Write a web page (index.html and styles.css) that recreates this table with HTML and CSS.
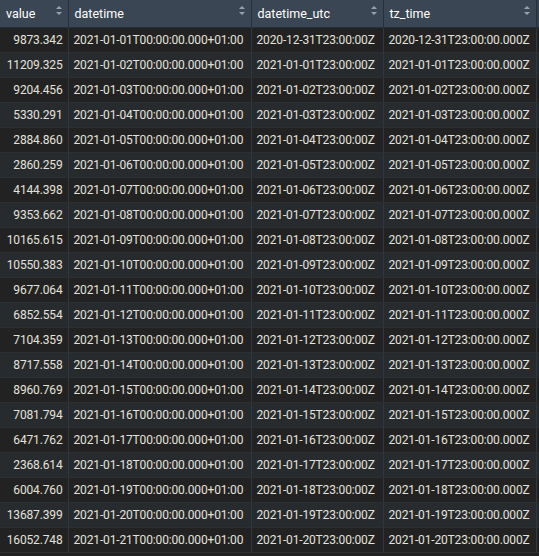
FILE: index.html
```html
<!DOCTYPE html>
<html lang="en">
<head>
    <meta charset="UTF-8">
    <title>Data viewer</title>
    <link rel="stylesheet" href="styles.css">
</head>
<body>

    <table class="grid">
        <colgroup>
            <col class="col-value">
            <col class="col-datetime">
            <col class="col-utc">
            <col class="col-tz">
            <col class="col-fill">
        </colgroup>
        <thead>
            <tr>
                <th><span>value</span><i class="sort"></i></th>
                <th><span>datetime</span><i class="sort"></i></th>
                <th><span>datetime_utc</span><i class="sort"></i></th>
                <th><span>tz_time</span><i class="sort"></i></th>
                <th class="fill"></th>
            </tr>
        </thead>
        <tbody id="rows"></tbody>
    </table>

    <script>
        // Build the rows from the values
        const values = [
            '9873.342', '11209.325', '9204.456', '5330.291', '2884.860', '2860.259', '4144.398',
            '9353.662', '10165.615', '10550.383', '9677.064', '6852.554', '7104.359', '8717.558',
            '8960.769', '7081.794', '6471.762', '2368.614', '6004.760', '13687.399', '16052.748'
        ];

        const pad = (n) => String(n).padStart(2, '0');
        const tbody = document.getElementById('rows');

        values.forEach((value, i) => {
            const day = i + 1;
            const utcDay = i === 0 ? '2020-12-31' : '2021-01-' + pad(i);
            const tr = document.createElement('tr');
            tr.innerHTML =
                '<td class="num">' + value + '</td>' +
                '<td>2021-01-' + pad(day) + 'T00:00:00.000+01:00</td>' +
                '<td>' + utcDay + 'T23:00:00Z</td>' +
                '<td>' + utcDay + 'T23:00:00.000Z</td>' +
                '<td class="fill"></td>';
            tbody.appendChild(tr);
        });
    </script>

</body>
</html>
```

FILE: styles.css
```css
* {
    margin: 0;
    padding: 0;
    box-sizing: border-box;
}

body {
    background: #222222;
    font-family: Roboto, 'Noto Sans', sans-serif;
    color: #e4e2dc;
    overflow: hidden;
}

.grid {
    border-collapse: collapse;
    table-layout: fixed;
    width: 539px;
    font-size: 12px;
}

.col-value { width: 68px; }
.col-datetime { width: 183px; }
.col-utc { width: 132px; }
.col-tz { width: 153px; }
.col-fill { width: 3px; }

/* Header */
.grid th {
    position: relative;
    height: 27px;
    background: #3a4653;
    color: #ffffff;
    font-weight: 400;
    font-size: 12.5px;
    text-align: left;
    padding: 0 6px;
    border-right: 1px solid #26303a;
    border-bottom: 1px solid #26303a;
}

.grid th.fill {
    padding: 0;
    border-right: none;
    background: #34404c;
}

.sort {
    position: absolute;
    right: 6px;
    top: 6px;
    width: 6px;
    height: 9px;
}

.sort::before,
.sort::after {
    content: '';
    position: absolute;
    left: 0;
    border-left: 3px solid transparent;
    border-right: 3px solid transparent;
}

.sort::before {
    top: 0;
    border-bottom: 3.5px solid #98a2ab;
}

.sort::after {
    bottom: 0;
    border-top: 3.5px solid #98a2ab;
}

/* Body */
.grid td {
    height: 25px;
    padding: 0 5px;
    letter-spacing: -0.15px;
    white-space: nowrap;
    overflow: hidden;
    border-right: 1px solid #2e3842;
    border-bottom: 1px solid #2c2f33;
}

.grid td.num {
    text-align: right;
}

.grid td.fill {
    padding: 0;
    border-right: none;
}

.grid tbody tr:nth-child(odd) {
    background: #222222;
}

.grid tbody tr:nth-child(even) {
    background: #282b2e;
}
```
